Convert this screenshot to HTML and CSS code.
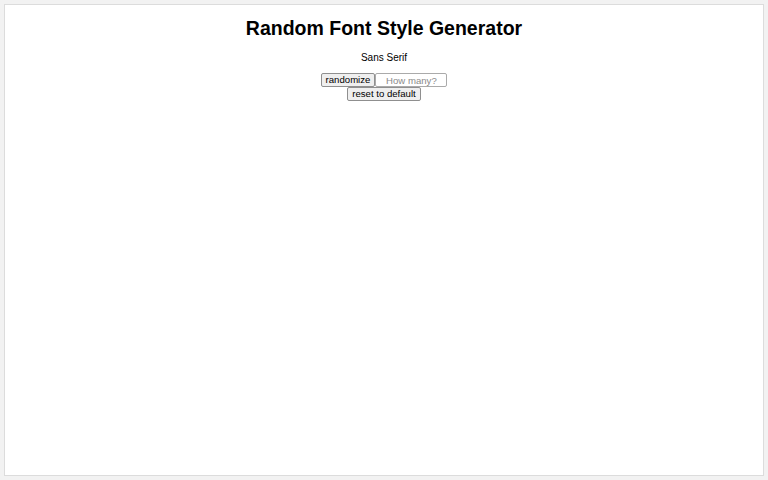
FILE: index.html
```html
<!DOCTYPE html>
<html lang="en">
<head>
<meta charset="utf-8">
<title>Random Font Style Generator</title>
<link rel="stylesheet" href="styles.css">
</head>
<body>
<main class="panel">
  <h1 class="title">Random Font Style Generator</h1>
  <p class="sample">Sans Serif</p>
  <div class="controls">
    <div class="row">
      <button class="btn" type="button">randomize</button><input class="count" type="text" placeholder="How many?">
    </div>
    <div class="row">
      <button class="btn" type="button">reset to default</button>
    </div>
  </div>
</main>
</body>
</html>
```
FILE: styles.css
```css
html, body {
  margin: 0;
  height: 100%;
}

body {
  background: #f2f2f2;
  padding: 4px;
  box-sizing: border-box;
  font-family: "Liberation Sans", Arial, sans-serif;
}

.panel {
  box-sizing: border-box;
  height: 472px;
  background: #fff;
  border: 1px solid #dcdcdc;
  text-align: center;
  padding-top: 11px;
}

.title {
  margin: 0;
  font-size: 19.5px;
  font-weight: bold;
  line-height: 24px;
  color: #000;
}

.sample {
  margin: 12px 0 0;
  font-size: 10px;
  line-height: 12px;
  color: #000;
}

.controls {
  margin-top: 9px;
}

.row {
  display: flex;
  justify-content: center;
}

.btn {
  font-family: "Liberation Sans", Arial, sans-serif;
  font-size: 9.6px;
  line-height: 12px;
  padding: 0 4px;
  height: 14px;
  margin: 0;
  background: #efefef;
  border: 1px solid #8f8f8f;
  border-radius: 2px;
  color: #000;
}

.count {
  box-sizing: border-box;
  font-family: "Liberation Sans", Arial, sans-serif;
  font-size: 9.6px;
  width: 72px;
  height: 14px;
  margin: 0;
  padding: 0 8px;
  border: 1px solid #aaaaaa;
  border-radius: 2px;
  background: #fff;
  text-align: center;
}

.count::placeholder {
  color: #8a8a8a;
}
```
